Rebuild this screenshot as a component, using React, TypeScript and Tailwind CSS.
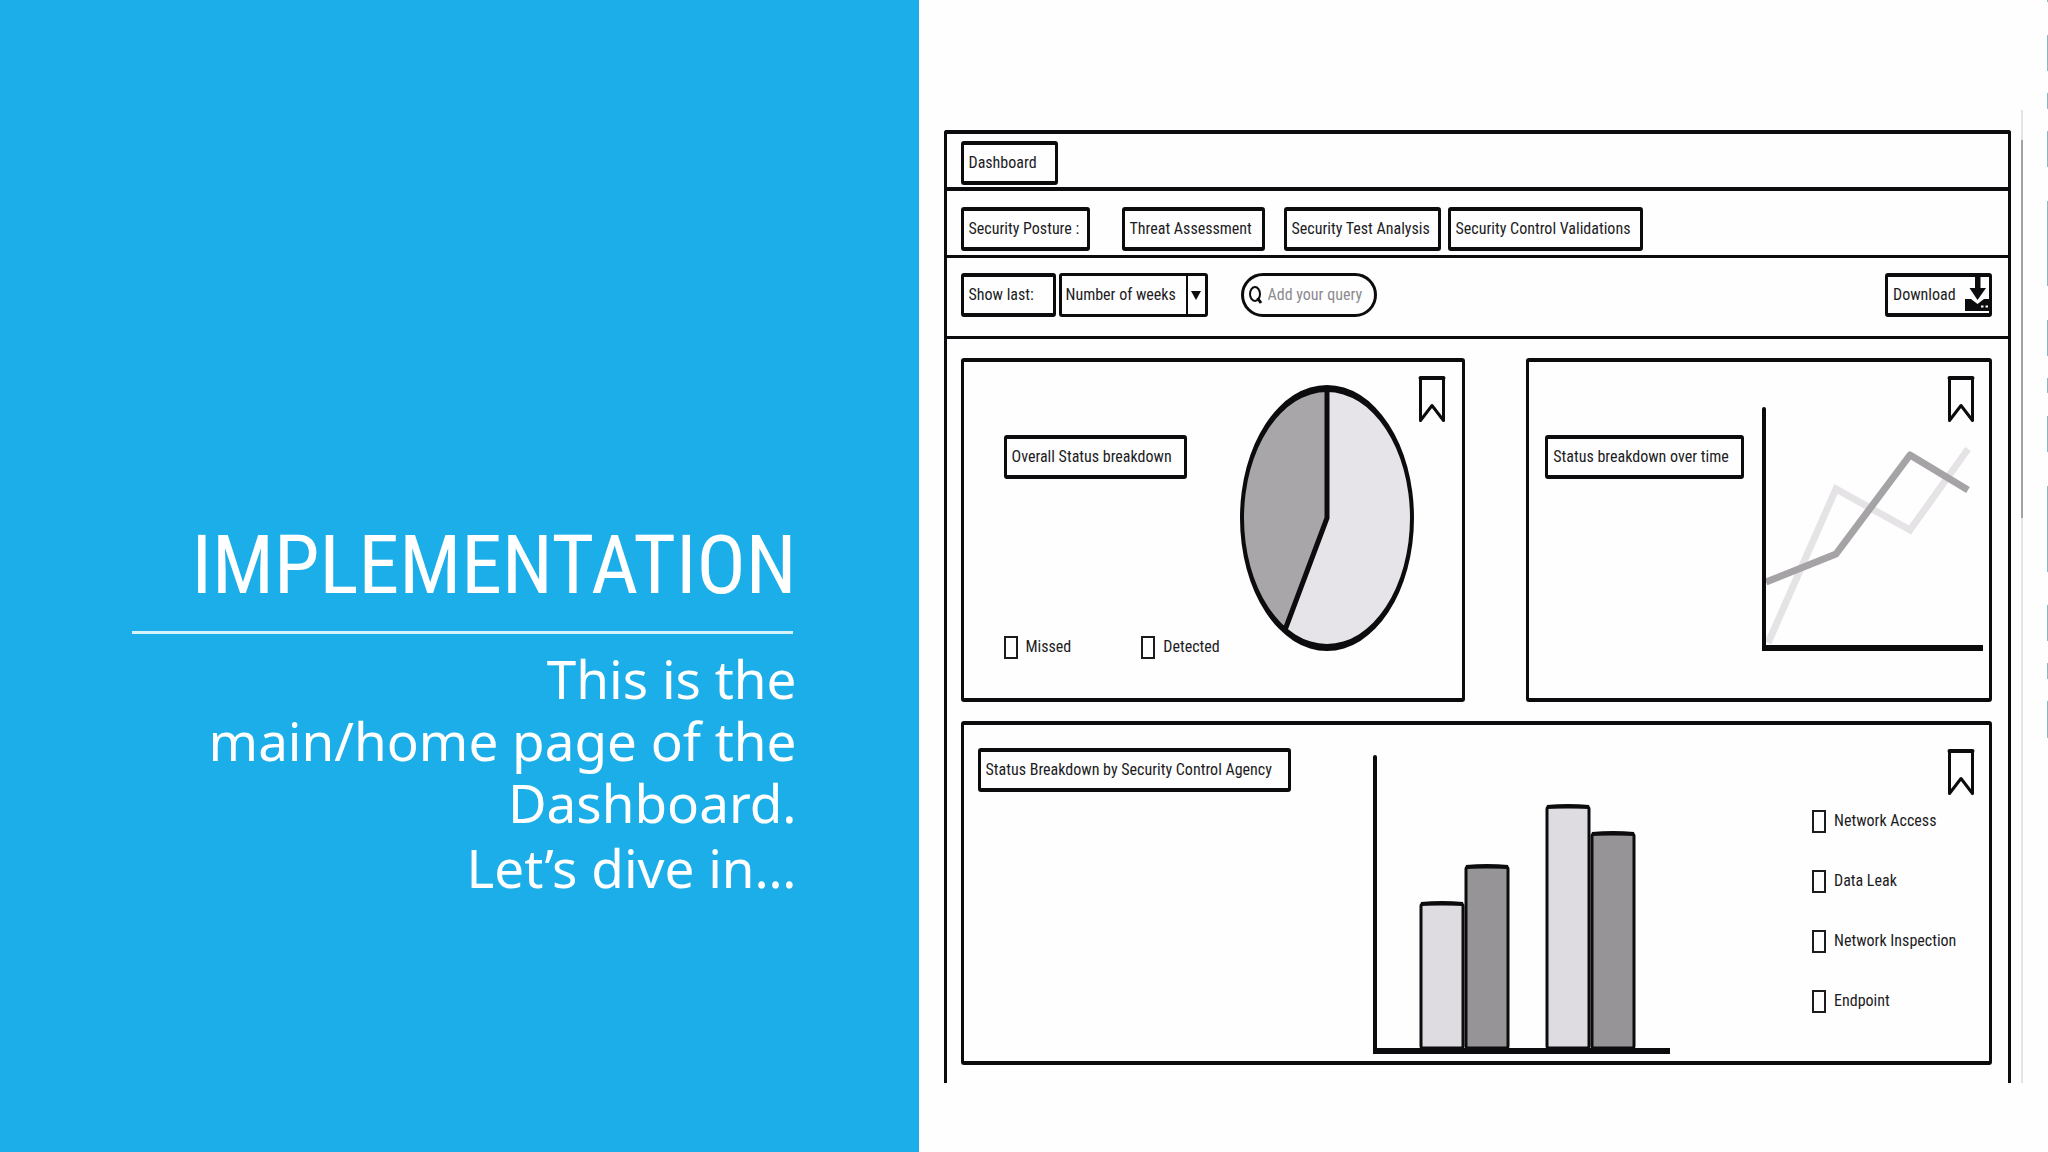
import type { ReactNode } from 'react'
import { clsx } from 'clsx'

const tabs = [
  { label: 'Security Posture :', className: 'w-[129px] mr-8' },
  { label: 'Threat Assessment', className: 'w-[143px] mr-[19px]' },
  { label: 'Security Test Analysis', className: 'w-[157px] mr-[7px]' },
  { label: 'Security Control Validations', className: 'w-[195px]' },
]

const statuses = ['Missed', 'Detected']
const controls = ['Network Access', 'Data Leak', 'Network Inspection', 'Endpoint']

const bars = [
  { x: 48, top: 148, fill: '#dedce0' },
  { x: 93, top: 111, fill: '#969497' },
  { x: 174, top: 51, fill: '#dedce0' },
  { x: 219, top: 78, fill: '#969497' },
]

const edgeMarks = [
  [0, 2],
  [35, 71],
  [93, 109],
  [131, 167],
  [201, 286],
  [320, 356],
  [378, 393],
  [416, 452],
  [486, 572],
  [605, 641],
  [663, 679],
  [701, 738],
]

const box = 'h-11 px-[5px] border-x-[3px] border-y-4 border-[#0c0c0e] rounded-[3px] flex items-center whitespace-nowrap'

const Card = ({ className, children }: { className?: string; children: ReactNode }) => (
  <section className={clsx('border-x-[3px] border-y-4 border-[#0c0c0e] rounded-[3px] h-[344px] flex', className)}>
    {children}
  </section>
)

const Check = ({ label }: { label: string }) => (
  <label className="flex items-center gap-2 h-6">
    <input type="checkbox" className="appearance-none w-[14px] h-[23px] border-2 border-[#1c1c1e] checked:bg-gray-500" />
    {label}
  </label>
)

const BookmarkButton = () => (
  <button type="button" aria-label="Bookmark" className="block w-[28px] h-[48px]">
    <svg viewBox="0 0 28 48" className="w-full h-full" fill="none" stroke="#0c0c0e" strokeLinejoin="round">
      <path d="M2.5 2.5V45.5L14 30.5L25.5 45.5V2.5" strokeWidth="3" />
      <path d="M2.5 3H25.5" strokeWidth="4" strokeLinecap="round" />
    </svg>
  </button>
)

const DownloadIcon = () => (
  <svg viewBox="0 0 24 38" className="w-6 h-[38px] shrink-0">
    <path d="M10 0H15.5V12H21L12.5 24L4.5 12H10Z" fill="#0c0c0e" />
    <path d="M0 23H6L12.5 28L19 23H24V35H0Z" fill="#0c0c0e" />
    <path d="M16 30.5H18.5M20.5 30.5H23" stroke="#fff" strokeWidth="2" />
  </svg>
)

const PieChart = () => (
  <svg viewBox="0 0 176 266" className="w-[176px] h-[266px]">
    <ellipse cx="88" cy="133" rx="85" ry="129" fill="#e6e4e8" />
    <path d="M88 133V4A85 129 0 0 0 46 245Z" fill="#a8a6a8" />
    <path d="M88 4V133L46 245" fill="none" stroke="#0c0c0e" strokeWidth="5" />
    <path
      d="M88 0A87 133 0 0 1 88 266A87 133 0 0 1 88 0ZM88 7A83 126 0 0 0 88 259A83 126 0 0 0 88 7Z"
      fill="#0c0c0e"
      fillRule="evenodd"
    />
  </svg>
)

const LineChart = () => (
  <svg viewBox="0 0 222 246" className="w-[222px] h-[246px]" fill="none">
    <path d="M6 236L74 82L148 123L206 42" stroke="#e5e3e6" strokeWidth="7" />
    <path d="M4 175L74 147L148 48L206 83" stroke="#a5a3a6" strokeWidth="7" strokeLinejoin="round" />
    <path d="M2 2V242" stroke="#0c0c0e" strokeWidth="4" strokeLinecap="round" />
    <path d="M0 241H221" stroke="#0c0c0e" strokeWidth="6" />
  </svg>
)

const BarChart = () => (
  <svg viewBox="0 0 300 300" className="w-[300px] h-[300px]">
    {bars.map((b) => (
      <g key={b.x} stroke="#0c0c0e">
        <rect x={b.x} y={b.top + 1} width="42" height={292 - b.top} rx="2" fill={b.fill} strokeWidth="3" />
        <path d={`M${b.x} ${b.top + 1}Q${b.x + 21} ${b.top - 1} ${b.x + 42} ${b.top + 1}`} fill="none" strokeWidth="4" />
      </g>
    ))}
    <path d="M2 2V296" stroke="#0c0c0e" strokeWidth="4" strokeLinecap="round" />
    <path d="M0 296H297" stroke="#0c0c0e" strokeWidth="6" />
  </svg>
)

const Intro = () => (
  <aside className="w-[44.85%] shrink-0 bg-[#1caee8] text-white text-right pt-[517px] pl-[132px] pr-[122px]">
    <h1 className="font-['Roboto_Condensed','Roboto',sans-serif] text-[82px] leading-[96px]">IMPLEMENTATION</h1>
    <hr className="border-0 h-[3px] mt-[18px] mr-1 bg-[#d5f3fd]" />
    <div className="font-['Noto_Sans',sans-serif] text-[53px] leading-[62px] mt-[14px]">
      <p>
        This is the
        <br />
        main/home page of the
        <br />
        Dashboard.
      </p>
      <p className="mt-[3px]">Let’s dive in…</p>
    </div>
  </aside>
)

const Wireframe = () => (
  <div className="grow border-x-[3px] border-t-4 border-[#0c0c0e] rounded-t-[3px] font-['Roboto_Condensed','Roboto',sans-serif] text-[16px] text-[#1c1c1e]">
    <header className="h-[57px] px-[14px] pt-[7px] border-b-4 border-[#0c0c0e]">
      <h2 className={clsx(box, 'w-[97px]')}>Dashboard</h2>
    </header>
    <nav className="h-[67px] px-[14px] flex items-center pt-[11px] border-b-[3px] border-[#0c0c0e]">
      {tabs.map((t) => (
        <button key={t.label} type="button" className={clsx(box, t.className)}>
          {t.label}
        </button>
      ))}
    </nav>
    <div className="h-[81px] pl-[14px] pr-4 flex items-start pt-[15px] border-b-[3px] border-[#0c0c0e]">
      <label htmlFor="weeks" className={clsx(box, 'w-[95px] mr-[3px]')}>
        Show last:
      </label>
      <div className="relative w-[149px] h-11 border-[3px] border-[#0c0c0e] rounded-[3px]">
        <select id="weeks" className="appearance-none w-full h-full pl-1 bg-transparent">
          <option>Number of weeks</option>
        </select>
        <svg viewBox="0 0 19 38" className="absolute right-0 top-0 w-[19px] h-[38px] pointer-events-none">
          <path d="M1 0V38" stroke="#0c0c0e" strokeWidth="2" />
          <path d="M5 15H15L10 24Z" fill="#0c0c0e" />
        </svg>
      </div>
      <label className="ml-[33px] w-[136px] h-11 border-[3px] border-[#0c0c0e] rounded-full flex items-center pl-1 gap-1">
        <svg viewBox="0 0 16 22" className="w-4 h-[22px] shrink-0" fill="none" stroke="#0c0c0e">
          <ellipse cx="7" cy="10" rx="5" ry="7" strokeWidth="2" />
          <path d="M9.5 14L13 19" strokeWidth="3" />
        </svg>
        <input
          type="text"
          aria-label="Add your query"
          placeholder="Add your query"
          className="w-full min-w-0 bg-transparent outline-none placeholder:text-[#8d8b90]"
        />
      </label>
      <button type="button" className={clsx(box, 'ml-auto w-[107px] justify-between pr-0')}>
        Download
        <DownloadIcon />
      </button>
    </div>
    <main className="pl-[14px] pr-4 pt-[19px]">
      <div className="grid grid-cols-[504fr_465fr] gap-[61px]">
        <Card className="pl-10 pr-4 justify-between">
          <div className="flex flex-col justify-between pt-[73px] pb-[39px]">
            <h3 className={clsx(box, 'w-[183px]')}>Overall Status breakdown</h3>
            <div className="flex gap-[70px]">
              {statuses.map((s) => (
                <Check key={s} label={s} />
              ))}
            </div>
          </div>
          <div className="flex pt-[13px] gap-[3px]">
            <div className="pt-[10px]">
              <PieChart />
            </div>
            <BookmarkButton />
          </div>
        </Card>
        <Card className="relative pl-4 pr-[5px] justify-between">
          <h3 className={clsx(box, 'mt-[73px] w-[199px]')}>Status breakdown over time</h3>
          <div className="pt-[45px]">
            <LineChart />
          </div>
          <div className="absolute right-[14px] top-[13px]">
            <BookmarkButton />
          </div>
        </Card>
      </div>
      <Card className="mt-[19px] pl-[14px] pr-[14px] pt-[23px]">
        <div className="flex-1">
          <h3 className={clsx(box, 'w-[313px]')}>Status Breakdown by Security Control Agency</h3>
        </div>
        <div className="pt-[7px]">
          <BarChart />
        </div>
        <div className="w-[302px] flex flex-col items-end">
          <BookmarkButton />
          <div className="w-[163px] pt-[13px] flex flex-col gap-9">
            {controls.map((c) => (
              <Check key={c} label={c} />
            ))}
          </div>
        </div>
      </Card>
    </main>
  </div>
)

export default function App() {
  return (
    <div className="min-h-screen flex bg-[#fefefe]">
      <Intro />
      <div className="grow flex pt-[110px] pb-[69px] pl-[25px]">
        <div className="grow flex pt-5">
          <Wireframe />
        </div>
        <div className="w-[2px] ml-[10px] bg-[#e4e4e6] pt-[30px]">
          <div className="h-[378px] bg-[#a3a2a6]" />
        </div>
      </div>
      <svg viewBox="0 0 25 1152" className="w-[25px] h-[1152px] shrink-0" fill="#8ab6cb">
        {edgeMarks.map(([y1, y2]) => (
          <rect key={y1} x="24" y={y1} width="1" height={y2 - y1} />
        ))}
      </svg>
    </div>
  )
}
